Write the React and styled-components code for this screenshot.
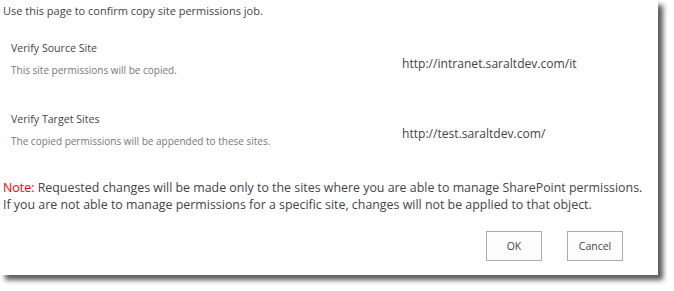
import styled, { createGlobalStyle } from "styled-components";

const GlobalStyle = createGlobalStyle`
  html, body {
    margin: 0;
    padding: 0;
    background: #ffffff;
  }
  body {
    font-family: "Open Sans", "Liberation Sans", sans-serif;
    color: #444444;
  }
`;

const Page = styled.div`
  width: 674px;
  height: 291px;
  background: #ffffff;
  overflow: hidden;
`;

const Panel = styled.section`
  width: 658px;
  height: 275px;
  box-sizing: border-box;
  background: #ffffff;
  padding: 3px 0 0 3px;
  box-shadow: 5px 5px 5px rgba(0, 0, 0, 0.65);
  display: flex;
  flex-direction: column;
`;

const Intro = styled.p`
  margin: 0;
  font-size: 11px;
  line-height: 16px;
`;

const FieldTable = styled.div`
  display: grid;
  grid-template-columns: 391px 1fr;
  margin-top: 21px;
  padding-left: 8px;
`;

const FieldLabel = styled.div`
  display: flex;
  flex-direction: column;
  height: ${(props) => props.rowHeight};
`;

const LabelTitle = styled.span`
  font-size: 10.6px;
  line-height: 16px;
  color: #444444;
`;

const LabelHint = styled.span`
  font-size: 10px;
  line-height: 14px;
  color: #777777;
  margin-top: 7px;
`;

const FieldValue = styled.div`
  font-size: 12.1px;
  line-height: 16px;
  padding-top: ${(props) => props.offset};
`;

const Note = styled.div`
  margin-top: 12px;
  font-size: 12.4px;
  line-height: 17px;
`;

const NoteLine = styled.div`
  white-space: nowrap;
`;

const NoteLead = styled.span`
  color: #ff0000;
`;

const ButtonRow = styled.div`
  display: flex;
  justify-content: flex-end;
  gap: 25px;
  margin-top: 18px;
  padding-right: 35px;
`;

const DialogButton = styled.button`
  width: 56px;
  height: 30px;
  box-sizing: border-box;
  background: #fdfdfd;
  border: 1px solid #ababab;
  font-family: "Open Sans", "Liberation Sans", sans-serif;
  font-size: 10.5px;
  color: #444444;
  padding: 0;
`;

const App = () => {
  return (
    <Page>
      <GlobalStyle />
      <Panel>
        <Intro>Use this page to confirm copy site permissions job.</Intro>
        <FieldTable>
          <FieldLabel rowHeight="71px">
            <LabelTitle>Verify Source Site</LabelTitle>
            <LabelHint>This site permissions will be copied.</LabelHint>
          </FieldLabel>
          <FieldValue offset="16px">http://intranet.saraltdev.com/it</FieldValue>
          <FieldLabel rowHeight="56px">
            <LabelTitle>Verify Target Sites</LabelTitle>
            <LabelHint>The copied permissions will be appended to these sites.</LabelHint>
          </FieldLabel>
          <FieldValue offset="15px">http://test.saraltdev.com/</FieldValue>
        </FieldTable>
        <Note>
          <NoteLine>
            <NoteLead>Note:</NoteLead> Requested changes will be made only to
            the sites where you are able to manage SharePoint permissions.
          </NoteLine>
          <NoteLine>
            If you are not able to manage permissions for a specific site,
            changes will not be applied to that object.
          </NoteLine>
        </Note>
        <ButtonRow>
          <DialogButton>OK</DialogButton>
          <DialogButton>Cancel</DialogButton>
        </ButtonRow>
      </Panel>
    </Page>
  );
};

export default App;
